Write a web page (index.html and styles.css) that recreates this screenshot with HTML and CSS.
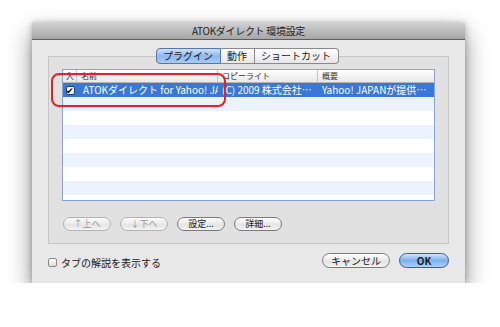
FILE: index.html
```html
<!DOCTYPE html>
<html lang="ja">
<head>
    <meta charset="UTF-8">
    <title>ATOKダイレクト 環境設定</title>
    <link rel="stylesheet" href="styles.css">
</head>
<body>

<div class="window">
    <div class="titlebar">ATOKダイレクト 環境設定</div>

    <div class="content">
        <div class="tabs">
            <span class="tab active t-plugin">プラグイン</span>
            <span class="tab t-action">動作</span>
            <span class="tab t-shortcut">ショートカット</span>
        </div>

        <div class="group">
            <div class="table">
                <div class="row head">
                    <div class="cell c-check">入</div>
                    <div class="cell c-name">名前</div>
                    <div class="cell c-copy">コピーライト</div>
                    <div class="cell c-desc">概要</div>
                </div>
                <div class="row selected">
                    <div class="cell c-check"><span class="checkbox checked">✔</span></div>
                    <div class="cell c-name">ATOKダイレクト for Yahoo! JAPAN</div>
                    <div class="cell c-copy">(C) 2009 株式会社ジャストシステム</div>
                    <div class="cell c-desc">Yahoo! JAPANが提供するサービス</div>
                </div>
                <div class="row stripe"></div>
                <div class="row"></div>
                <div class="row stripe"></div>
                <div class="row"></div>
                <div class="row stripe"></div>
                <div class="row"></div>
                <div class="row stripe"></div>
                <div class="row"></div>
            </div>

            <div class="buttons">
                <span class="btn disabled">↑上へ</span>
                <span class="btn disabled">↓下へ</span>
                <span class="btn">設定...</span>
                <span class="btn">詳細...</span>
            </div>
        </div>

        <div class="footer">
            <label class="option"><span class="checkbox"></span>タブの解説を表示する</label>
            <div class="actions">
                <span class="btn cancel">キャンセル</span>
                <span class="btn ok">OK</span>
            </div>
        </div>
    </div>
</div>

<!-- 赤い囲み -->
<div class="mark"></div>

</body>
</html>
```

FILE: styles.css
```css
body {
    margin: 0;
    padding: 0;
    background-color: #ffffff;
    font-family: 'Noto Sans CJK JP', 'Noto Sans', sans-serif;
    font-size: 10px;
    color: #1a1a1a;
    position: relative;
    overflow: hidden;
}

.window {
    margin: 23px 0 0 32px;
    width: 433px;
    height: 260px;
    background-color: #e8e8e8;
    box-shadow: 0 10px 22px rgba(0, 0, 0, 0.45), 0 0 6px rgba(0, 0, 0, 0.25);
    display: flex;
    flex-direction: column;
}

.titlebar {
    height: 16px;
    line-height: 16px;
    text-align: center;
    font-size: 10px;
    color: #222;
    background: linear-gradient(#d0d0d0, #a6a6a6);
    border-bottom: 1px solid #5e5e5e;
    letter-spacing: -0.3px;
}

.content {
    padding: 0 16px;
}

/* タブ */
.tabs {
    margin-top: 8px;
    margin-bottom: -8px;
    display: flex;
    justify-content: center;
    position: relative;
    z-index: 1;
    margin-left: -3px;
}

.tab {
    height: 16px;
    line-height: 14px;
    font-size: 10px;
    text-align: center;
    background: linear-gradient(#ffffff, #e6e6e6);
    border: 1px solid #8a8a8a;
    border-left: none;
    box-sizing: border-box;
}

.t-plugin   { width: 65px; }
.t-action   { width: 34px; }
.t-shortcut { width: 84px; }

.tab:first-child {
    border-left: 1px solid #6f7fa0;
    border-radius: 4px 0 0 4px;
}

.tab:last-child {
    border-radius: 0 4px 4px 0;
}

.tab.active {
    background: linear-gradient(#cfe3fb, #8db8ef 50%, #a7cbf6);
    border-color: #5a76a8;
}

/* グループ */
.group {
    height: 188px;
    box-sizing: border-box;
    border: 1px solid #c6c6c6;
    background-color: #e1e1e1;
    padding: 12px 13px 0 13px;
}

.table {
    height: 132px;
    box-sizing: border-box;
    border: 1px solid #8ba3cf;
    background-color: #ffffff;
    overflow: hidden;
}

.row {
    display: flex;
    height: 14px;
    line-height: 14px;
}

.row.stripe {
    background-color: #edf3fe;
}

.row.head {
    height: 12px;
    line-height: 12px;
    font-size: 8px;
    color: #333;
    background: linear-gradient(#ffffff, #e8e8e8);
    border-bottom: 1px solid #b5b5b5;
}

.row.head .cell {
    border-right: 1px solid #c4c4c4;
}

.row.selected {
    background-color: #3a77d6;
    color: #ffffff;
    font-size: 10px;
}

.cell {
    white-space: nowrap;
    overflow: hidden;
    text-overflow: ellipsis;
    padding-left: 4px;
    box-sizing: border-box;
}

.c-check { width: 14px; padding-left: 3px; }
.c-name  { width: 141px; }
.c-copy  { width: 100px; }
.c-desc  { flex: 1; border-right: none !important; }

.selected .c-name { text-overflow: clip; padding-left: 6px; }

.checkbox {
    display: inline-block;
    width: 9px;
    height: 9px;
    border: 1px solid #8a8a8a;
    border-radius: 2px;
    background: linear-gradient(#ffffff, #dcdcdc);
    vertical-align: middle;
    box-sizing: border-box;
}

.checkbox.checked {
    border-color: #1d3e74;
    color: #000;
    background: #fff;
    font-size: 9px;
    line-height: 7px;
    text-indent: -1px;
    margin-top: -2px;
}

/* ボタン */
.buttons {
    margin-top: 16px;
    display: flex;
    gap: 9px;
    padding-left: 1px;
}

.btn {
    width: 48px;
    height: 14px;
    line-height: 12px;
    font-size: 9px;
    border: 1px solid #7a7a7a;
    border-radius: 8px;
    background: linear-gradient(#ffffff, #e4e4e4 60%, #f4f4f4);
    text-align: center;
    white-space: nowrap;
    box-sizing: border-box;
}

.btn.disabled {
    color: #9a9a9a;
    border-color: #b2b2b2;
}

.footer {
    margin-top: 8px;
    display: flex;
    justify-content: space-between;
    align-items: center;
    height: 16px;
}

.option {
    font-size: 10px;
    display: flex;
    align-items: center;
    gap: 4px;
    margin-top: 4px;
}

.actions {
    display: flex;
    gap: 9px;
}

.btn.cancel {
    width: 68px;
    height: 15px;
    line-height: 13px;
    font-size: 10px;
}

.btn.ok {
    width: 50px;
    height: 15px;
    line-height: 13px;
    font-size: 10px;
    font-weight: bold;
    border-color: #3d5f95;
    background: linear-gradient(#cfe3fb, #7fb0ee 50%, #a9d0fa);
}

/* 赤い囲み */
.mark {
    position: absolute;
    left: 51px;
    top: 73px;
    width: 171px;
    height: 30px;
    border: 2px solid #ee1c24;
    border-radius: 8px;
}
```
